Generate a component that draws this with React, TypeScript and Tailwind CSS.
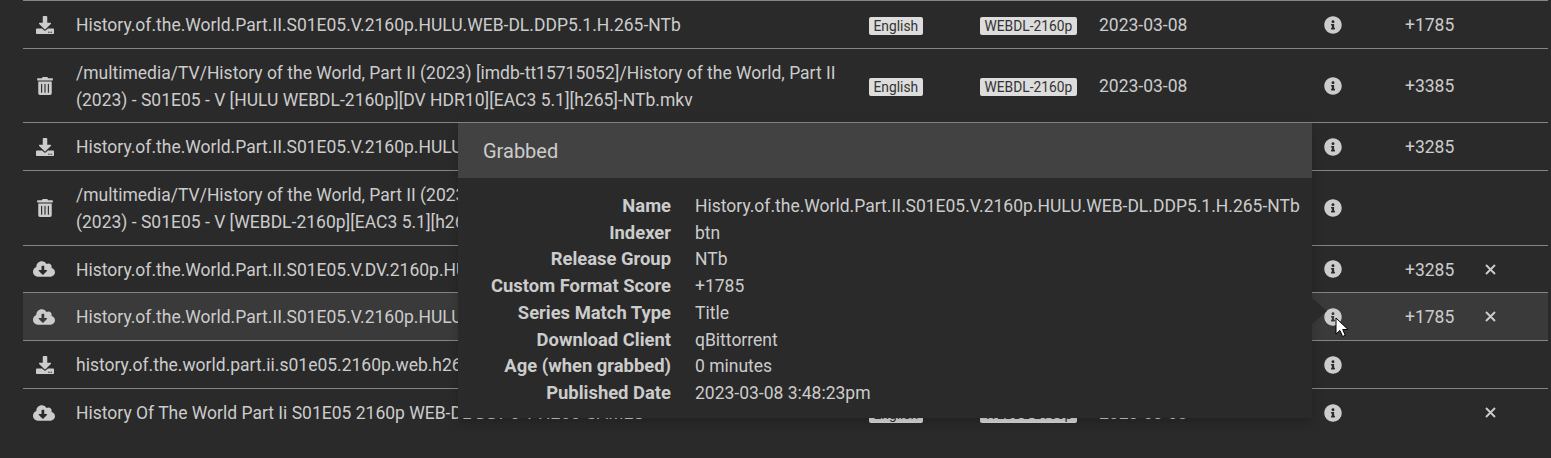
import { FaCloudDownloadAlt, FaDownload, FaInfoCircle, FaTrashAlt } from "react-icons/fa";

const grabbed = "History.of.the.World.Part.II.S01E05.V.2160p.HULU.WEB-DL.DDP5.1.H.265-NTb";

const rows = [
  { icon: "download", height: "h-[48px]", title: grabbed, score: "+1785" },
  {
    icon: "trash",
    height: "h-[74px]",
    title:
      "/multimedia/TV/History of the World, Part II (2023) [imdb-tt15715052]/History of the World, Part II (2023) - S01E05 - V [HULU WEBDL-2160p][DV HDR10][EAC3 5.1][h265]-NTb.mkv",
    score: "+3385",
  },
  { icon: "download", height: "h-[48px]", title: grabbed, score: "+3285" },
  {
    icon: "trash",
    height: "h-[75px]",
    title:
      "/multimedia/TV/History of the World, Part II (2023) [imdb-tt15715052]/History of the World, Part II (2023) - S01E05 - V [WEBDL-2160p][EAC3 5.1][h265]-NTb.mkv",
    score: "",
  },
  {
    icon: "cloud",
    height: "h-[47px]",
    title: "History.of.the.World.Part.II.S01E05.V.DV.2160p.HULU.WEB-DL.DDP5.1.H.265-NTb",
    score: "+3285",
    failed: true,
  },
  { icon: "cloud", height: "h-[48px]", title: grabbed, score: "+1785", failed: true, hover: true },
  { icon: "download", height: "h-[48px]", title: "history.of.the.world.part.ii.s01e05.2160p.web.h265-ggez", score: "" },
  {
    icon: "cloud",
    height: "h-[48px]",
    title: "History Of The World Part Ii S01E05 2160p WEB-DL DDP5 1 H265-GAMES",
    score: "",
    failed: true,
  },
];

const details = [
  ["Name", grabbed],
  ["Indexer", "btn"],
  ["Release Group", "NTb"],
  ["Custom Format Score", "+1785"],
  ["Series Match Type", "Title"],
  ["Download Client", "qBittorrent"],
  ["Age (when grabbed)", "0 minutes"],
  ["Published Date", "2023-03-08 3:48:23pm"],
];

function RowIcon({ icon }: { icon: string }) {
  if (icon === "trash") return <FaTrashAlt size={18} className="ml-[13px]" />;
  if (icon === "cloud") return <FaCloudDownloadAlt size={22} className="ml-[10px]" />;
  return <FaDownload size={18} className="ml-[13px]" />;
}

function Label({ children }: { children: string }) {
  return (
    <span className="block h-[18px] rounded-[2px] bg-[#dddddd] px-[4.5px] text-[13.8px] leading-[18px] text-[#333333]">
      {children}
    </span>
  );
}

function HistoryRow({ row }: { row: (typeof rows)[number] }) {
  return (
    <div className={`flex items-center border-t border-[#858585] ${row.height} ${row.hover ? "bg-[#3a3a3a]" : ""}`}>
      <div className="w-[53px] flex-none">
        <RowIcon icon={row.icon} />
      </div>
      <div className="w-[793px] flex-none pt-[2px] pr-[20px]">{row.title}</div>
      <div className="flex w-[111px] flex-none pt-[2px]">
        <Label>English</Label>
      </div>
      <div className="flex w-[119px] flex-none pt-[2px]">
        <Label>WEBDL-2160p</Label>
      </div>
      <div className="w-[225px] flex-none pt-[2px]">2023-03-08</div>
      <div className="w-[81px] flex-none">
        <FaInfoCircle size={18} />
      </div>
      <div className="w-[79px] flex-none pt-[2px]">{row.score}</div>
      <div className="flex-none">
        {row.failed && (
          <svg className="ml-[1px]" width="11" height="11" viewBox="0 0 11 11">
            <path d="M1 1l9 9M10 1l-9 9" stroke="#cccccc" strokeWidth="1.9" />
          </svg>
        )}
      </div>
    </div>
  );
}

export default function App() {
  return (
    <div className="relative h-[458px] w-[1551px] overflow-hidden bg-[#2a2a2a] pl-[23px] pr-[3px] font-['Roboto',sans-serif] text-[17.5px] leading-[27px] text-[#cccccc]">
      {rows.map((row, i) => (
        <HistoryRow key={i} row={row} />
      ))}

      <div className="absolute top-[123px] left-[458px] h-[295px] w-[854px] bg-[#2a2a2a] shadow-[0_5px_10px_rgba(0,0,0,0.2)]">
        <div className="flex h-[55px] items-center bg-[#424242] pt-[2px] pl-[25px] text-[20px]">Grabbed</div>
        <div className="grid grid-cols-[190px_1fr] gap-x-[24px] pt-[15px] pl-[23px] leading-[26.7px]">
          {details.map(([name, value]) => (
            <div key={name} className="contents">
              <div className="text-right text-[18.4px] font-bold">{name}</div>
              <div className="whitespace-nowrap">{value}</div>
            </div>
          ))}
        </div>
        <div className="absolute top-[175px] left-full h-0 w-0 border-y-[13px] border-l-[15px] border-y-transparent border-l-[#2a2a2a]" />
      </div>

      <svg className="absolute top-[317px] left-[1335px]" width="14" height="21" viewBox="0 0 14 21">
        <path d="M1 1v16l3.9-3.6 2.7 6.1 2.7-1.2-2.6-5.8H13z" fill="#fff" stroke="#000" strokeWidth="1" />
      </svg>
    </div>
  );
}
